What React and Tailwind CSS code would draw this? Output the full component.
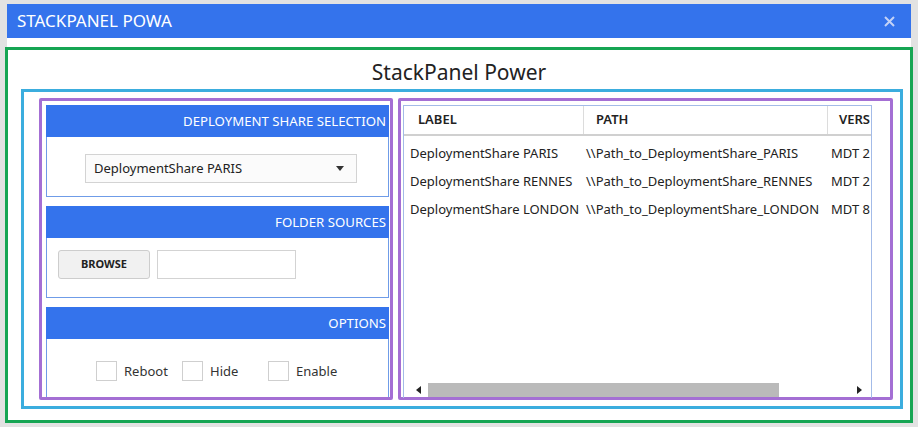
import React from "react";

const BLUE = "bg-[#3473ec]";

function Section({ title, children }) {
  return (
    <div className="w-[343px] flex flex-col">
      <div className={`h-[32px] ${BLUE} flex items-center justify-end pr-[3px] pt-[1px] text-white text-[13.2px]`}>
        {title}
      </div>
      <div className="h-[60px] border-x border-b border-[#6f9ce8] bg-white">{children}</div>
    </div>
  );
}

function Check({ label }) {
  return (
    <div className="w-[86px] flex items-center gap-[7px]">
      <div className="w-[21px] h-[20px] border border-[#cfcfcf] bg-white" />
      <span className="text-[13px] text-[#333] pt-[1px]">{label}</span>
    </div>
  );
}

const rows = [
  ["DeploymentShare PARIS", "\\\\Path_to_DeploymentShare_PARIS", "MDT 2"],
  ["DeploymentShare RENNES", "\\\\Path_to_DeploymentShare_RENNES", "MDT 2"],
  ["DeploymentShare LONDON", "\\\\Path_to_DeploymentShare_LONDON", "MDT 8"],
];

export default function App() {
  return (
    <div className="w-[918px] h-[427px] bg-[#e2e2e2] overflow-hidden pt-[4px] font-['Noto_Sans',sans-serif]">
      <div className={`ml-[7px] w-[904px] h-[34px] ${BLUE} flex items-center justify-between pl-[10px] pr-[16px]`}>
        <span className="text-white text-[17px]">STACKPANEL POWA</span>
        <svg width="11" height="11" viewBox="0 0 11 11">
          <path d="M1 1L10 10M10 1L1 10" stroke="#c3d2f6" strokeWidth="2" />
        </svg>
      </div>
      <div className="ml-[7px] w-[904px] h-[9px] bg-white" />
      <div className="ml-[5px] w-[908px] h-[376px] border-[3px] border-[#16a553] bg-white flex flex-col">
        <div className="h-[39px] pt-[9px] text-center text-[21px] leading-[27px] text-[#222]">
          StackPanel Power
        </div>
        <div className="ml-[13px] w-[882px] h-[320px] border-[3px] border-[#3badde] flex gap-[5px] pl-[15px] pt-[6px]">
          {/* Left panel */}
          <div className="w-[354px] h-[302px] border-[3px] border-[#a46fd4] rounded-[2px] overflow-hidden pl-[4px] pt-[4px] flex flex-col gap-[9px]">
            <Section title="DEPLOYMENT SHARE SELECTION">
              <div className="pl-[38px] pt-[17px]">
                <div className="w-[272px] h-[29px] border border-[#d3d3d3] bg-[#fbfbfb] flex items-center justify-between pl-[8px] pr-[12px]">
                  <span className="text-[13px] text-[#222]">DeploymentShare PARIS</span>
                  <svg width="8" height="5" viewBox="0 0 8 5">
                    <path d="M0 0H8L4 5Z" fill="#333" />
                  </svg>
                </div>
              </div>
            </Section>
            <Section title="FOLDER SOURCES">
              <div className="pl-[11px] pt-[12px] flex gap-[7px]">
                <div className="w-[92px] h-[29px] rounded-[3px] border border-[#cdcdcd] bg-[#f1f1f1] flex items-center justify-center text-[11px] font-bold text-[#222]">
                  BROWSE
                </div>
                <div className="w-[139px] h-[29px] border border-[#d3d3d3] bg-white" />
              </div>
            </Section>
            <Section title="OPTIONS">
              <div className="pl-[49px] pt-[22px] flex">
                <Check label="Reboot" />
                <Check label="Hide" />
                <Check label="Enable" />
              </div>
            </Section>
          </div>
          {/* Right panel */}
          <div className="w-[495px] h-[302px] border-[3px] border-[#a46fd4] rounded-[2px] pl-[2px] pt-[4px]">
            <div className="w-[469px] h-[293px] border border-[#a3bbe8] border-b-0 overflow-hidden flex flex-col relative">
              <div className="h-[30px] flex border-b-2 border-[#d0d0d0] text-[13px] font-semibold text-[#222] shrink-0">
                <div className="w-[180px] shrink-0 border-r border-[#dcdcdc] flex items-center pl-[14px]">LABEL</div>
                <div className="w-[244px] shrink-0 border-r border-[#dcdcdc] flex items-center pl-[12px]">PATH</div>
                <div className="w-[43px] shrink-0 overflow-hidden flex items-center pl-[11px] whitespace-nowrap">VERS</div>
              </div>
              <div className="pt-[4px] flex flex-col text-[13px] text-[#222]">
                {rows.map((r) => (
                  <div key={r[0]} className="h-[28px] flex items-center whitespace-nowrap">
                    <div className="w-[180px] shrink-0 pl-[6px]">{r[0]}</div>
                    <div className="w-[244px] shrink-0 pl-[2px]">{r[1]}</div>
                    <div className="w-[43px] shrink-0 overflow-hidden pl-[3px]">{r[2]}</div>
                  </div>
                ))}
              </div>
              <div className="mt-auto h-[14px] mb-[1px] flex items-center">
                <div className="w-[24px] flex justify-center pl-[4px]">
                  <svg width="5" height="8" viewBox="0 0 5 8"><path d="M5 0V8L0 4Z" fill="#222" /></svg>
                </div>
                <div className="w-[351px] h-[14px] bg-[#bababa]" />
                <div className="flex-1 flex justify-end pr-[9px]">
                  <svg width="5" height="8" viewBox="0 0 5 8"><path d="M0 0V8L5 4Z" fill="#222" /></svg>
                </div>
              </div>
            </div>
          </div>
        </div>
      </div>
    </div>
  );
}
